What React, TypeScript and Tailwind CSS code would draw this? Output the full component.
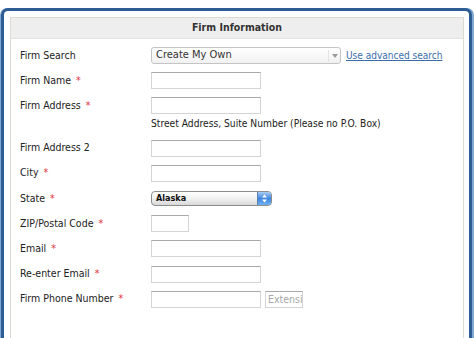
import React from "react";

const font = "font-['DejaVu_Sans_Condensed','DejaVu_Sans',Verdana,sans-serif]";

const Req = () => <span className="text-[#e0303c] ml-[5px]">*</span>;

const TextInput = ({ w = "w-[110px]" }: { w?: string }) => (
  <input
    type="text"
    className={`${w} h-[17px] bg-white border border-[#d4d4d4] border-t-[#a9a9a9] outline-none`}
  />
);

const Row = ({
  label,
  required,
  children,
}: {
  label: string;
  required?: boolean;
  children: React.ReactNode;
}) => (
  <div className="flex items-center h-[25.2px]">
    <label className="w-[140px] shrink-0 pl-[9px]">
      {label}
      {required && <Req />}
    </label>
    {children}
  </div>
);

const App = () => {
  return (
    <div className={`w-[474px] h-[338px] bg-white overflow-hidden pt-[8px] ${font} text-[#222]`}>
      <div className="ml-[1px] w-[471px] h-[340px] border-[3px] border-b-0 border-[#2e5c95] rounded-t-[7px] shadow-[-1px_0_0_#7fa9d1,2px_0_0_#7fa9d1] bg-white pt-[6px] pl-[6px] pr-[5px]">
        <div className="border border-[#dcdad3] h-[360px]">
          <div className="h-[21px] bg-[#eeeeee] border-b border-[#e2e2e2] flex items-center justify-center text-[10.5px] font-bold text-[#333]">
            Firm Information
          </div>
          <div className="pt-[4px] text-[10.5px]">
            <Row label="Firm Search">
              <div className="w-[190px] h-[17px] rounded-[3px] border border-[#c4c4c4] bg-gradient-to-b from-white to-[#f1f1f1] flex items-center justify-between pl-[4px] pr-[2px]">
                <span className="text-[11px] text-[#333]">Create My Own</span>
                <span className="w-[10px] h-[12px] border-l border-[#e3e3e3] flex items-center justify-end">
                  <svg width="6" height="4" viewBox="0 0 6 4">
                    <path d="M0 0 L6 0 L3 4 Z" fill="#9a9a9a" />
                  </svg>
                </span>
              </div>
              <a href="#" className="ml-[5px] text-[10px] text-[#3b6ea8] underline">
                Use advanced search
              </a>
            </Row>
            <Row label="Firm Name" required>
              <TextInput />
            </Row>
            <Row label="Firm Address" required>
              <TextInput />
            </Row>
            <div className="h-[17px] pl-[140px] -mt-[4px] leading-[17px] text-[10.2px]">
              Street Address, Suite Number (Please no P.O. Box)
            </div>
            <div className="h-[4px]" />
            <Row label="Firm Address 2">
              <TextInput />
            </Row>
            <Row label="City" required>
              <TextInput />
            </Row>
            <Row label="State" required>
              <div className="w-[121px] h-[15px] rounded-[4px] border border-[#8d8d8d] bg-gradient-to-b from-white via-[#f2f2f2] to-[#d8d8d8] flex items-center justify-between pl-[4px] overflow-hidden">
                <span className="text-[9px] font-bold text-[#111]">Alaska</span>
                <span className="w-[14px] h-full bg-gradient-to-b from-[#a9cdf5] via-[#3f86de] to-[#6fb0f4] border-l border-[#5d7fae] flex items-center justify-center">
                  <svg width="5" height="9" viewBox="0 0 5 9">
                    <path d="M0 3.5 L2.5 0.5 L5 3.5 Z M0 5.5 L2.5 8.5 L5 5.5 Z" fill="#fff" />
                  </svg>
                </span>
              </div>
            </Row>
            <Row label="ZIP/Postal Code" required>
              <TextInput w="w-[38px]" />
            </Row>
            <Row label="Email" required>
              <TextInput />
            </Row>
            <Row label="Re-enter Email" required>
              <TextInput />
            </Row>
            <Row label="Firm Phone Number" required>
              <TextInput />
              <input
                type="text"
                placeholder="Extension"
                className="ml-[4px] w-[38px] h-[17px] pl-[2px] bg-white border border-[#d4d4d4] border-t-[#a9a9a9] outline-none text-[10.5px] placeholder:text-[#a8a8a8]"
              />
            </Row>
          </div>
        </div>
      </div>
    </div>
  );
};

export default App;
